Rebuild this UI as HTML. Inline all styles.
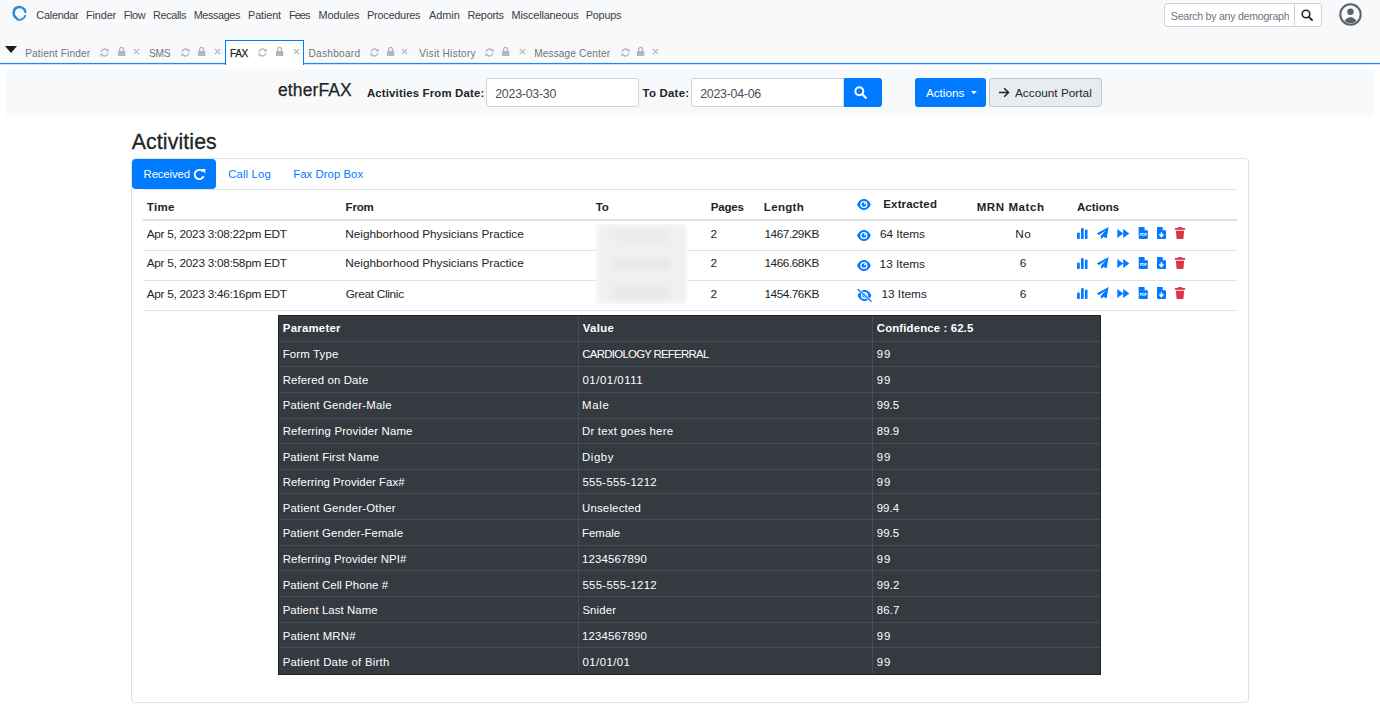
<!DOCTYPE html>
<html><head><meta charset="utf-8"><style>
html,body{margin:0;padding:0;width:1380px;height:708px;overflow:hidden;background:#fff;position:relative;font-family:"Liberation Sans",sans-serif}
.t{position:absolute;line-height:1;white-space:pre;font-family:"Liberation Sans",sans-serif}
svg{display:block}
</style></head><body>
<div style="position:absolute;left:0px;top:0px;width:1380px;height:61px;background:#f8f9fa"></div>
<svg style="position:absolute;left:10px;top:4px;" width="19" height="19" viewBox="0 0 19 19"><g fill="none" stroke="#2a8ad6" stroke-linecap="round"><path d="M3.98 6.15 A6.2 6.2 0 0 1 15.41 7.96" stroke-width="2.3"/><path d="M15.27 11.70 A6.3 6.3 0 0 1 7.40 15.54" stroke-width="1.9"/><path d="M7.15 14.54 A5.9 5.9 0 0 1 4.20 6.66" stroke-width="2.5"/></g></svg>
<div class="t" style="left:36.35px;top:10.17px;font-size:10.9px;font-weight:400;color:#3b4046;letter-spacing:-0.259px;">Calendar</div>
<div class="t" style="left:86.11px;top:10.17px;font-size:10.9px;font-weight:400;color:#3b4046;letter-spacing:-0.164px;">Finder</div>
<div class="t" style="left:123.71px;top:10.17px;font-size:10.9px;font-weight:400;color:#3b4046;letter-spacing:-0.383px;">Flow</div>
<div class="t" style="left:153.11px;top:10.17px;font-size:10.9px;font-weight:400;color:#3b4046;letter-spacing:-0.409px;">Recalls</div>
<div class="t" style="left:193.71px;top:10.17px;font-size:10.9px;font-weight:400;color:#3b4046;letter-spacing:-0.428px;">Messages</div>
<div class="t" style="left:248.11px;top:10.17px;font-size:10.9px;font-weight:400;color:#3b4046;letter-spacing:-0.160px;">Patient</div>
<div class="t" style="left:288.91px;top:10.17px;font-size:10.9px;font-weight:400;color:#3b4046;letter-spacing:-0.915px;">Fees</div>
<div class="t" style="left:318.41px;top:10.17px;font-size:10.9px;font-weight:400;color:#3b4046;letter-spacing:-0.003px;">Modules</div>
<div class="t" style="left:367.11px;top:10.17px;font-size:10.9px;font-weight:400;color:#3b4046;letter-spacing:-0.251px;">Procedures</div>
<div class="t" style="left:428.98px;top:10.17px;font-size:10.9px;font-weight:400;color:#3b4046;letter-spacing:-0.018px;">Admin</div>
<div class="t" style="left:467.51px;top:10.17px;font-size:10.9px;font-weight:400;color:#3b4046;letter-spacing:-0.279px;">Reports</div>
<div class="t" style="left:511.61px;top:10.17px;font-size:10.9px;font-weight:400;color:#3b4046;letter-spacing:-0.165px;">Miscellaneous</div>
<div class="t" style="left:585.71px;top:10.17px;font-size:10.9px;font-weight:400;color:#3b4046;letter-spacing:-0.217px;">Popups</div>
<div style="position:absolute;left:1164px;top:3px;width:131px;height:24px;background:#fff;border:1px solid #ced4da;border-radius:3px 0 0 3px;box-sizing:border-box"></div>
<div class="t" style="left:1170.82px;top:10.93px;font-size:10.6px;font-weight:400;color:#6c757d;letter-spacing:-0.250px;width:118px;overflow:hidden">Search by any demograph</div>
<div style="position:absolute;left:1294px;top:3px;width:28px;height:24px;background:#fff;border:1px solid #ced4da;border-radius:0 3px 3px 0;box-sizing:border-box"></div>
<svg style="position:absolute;left:1301px;top:9px;" width="12" height="12" viewBox="0 0 12 12"><circle cx="5" cy="5" r="3.8" fill="none" stroke="#212529" stroke-width="1.6"/><path d="M7.8 7.8 L11 11" stroke="#212529" stroke-width="1.8" stroke-linecap="round"/></svg>
<svg style="position:absolute;left:1339px;top:3px;" width="23" height="23" viewBox="0 0 23 23"><circle cx="11.5" cy="11.5" r="10.2" fill="none" stroke="#5a6169" stroke-width="2"/><circle cx="11.5" cy="8.8" r="3.2" fill="#5a6169"/><path d="M5.5 17.5 Q11.5 10.5 17.5 17.5 L16 19 Q11.5 21.5 7 19 Z" fill="#5a6169"/></svg>
<svg style="position:absolute;left:5px;top:46px;" width="13" height="8" viewBox="0 0 13 8"><path d="M0 0 L12 0 L6 7 Z" fill="#1a1a1a"/></svg>
<div style="position:absolute;left:0px;top:63px;width:1380px;height:1px;background:#1f87ff"></div>
<div style="position:absolute;left:0px;top:64px;width:1380px;height:1px;background:#c9e2ff"></div>
<div style="position:absolute;left:0px;top:62px;width:1380px;height:1px;background:#e3f0ff"></div>
<div style="position:absolute;left:225px;top:40px;width:79px;height:25px;background:#fff;border:1px solid #007bff;border-bottom:none;box-sizing:border-box"></div>
<div class="t" style="left:25.17px;top:48.75px;font-size:10.1px;font-weight:400;color:#6c757d;letter-spacing:0.162px;">Patient Finder</div>
<svg style="position:absolute;left:100px;top:47.5px;" width="9" height="9" viewBox="0 0 9 9"><path d="M1.2 4 A3.4 3.4 0 0 1 7.2 2.3" fill="none" stroke="#adb5bd" stroke-width="1.3"/><path d="M7.8 5 A3.4 3.4 0 0 1 1.8 6.7" fill="none" stroke="#adb5bd" stroke-width="1.3"/><path d="M8.6 0.6 L8.6 3.6 L5.6 3.6 Z" fill="#adb5bd"/><path d="M0.4 8.4 L0.4 5.4 L3.4 5.4 Z" fill="#adb5bd"/></svg>
<svg style="position:absolute;left:116.5px;top:46px;" width="10" height="11" viewBox="0 0 10 11"><path d="M2.7 5.4 V3.3 A1.9 1.9 0 0 1 6.5 3.3 V5.4" fill="none" stroke="#b0b6bc" stroke-width="1.3"/><rect x="1" y="5" width="7.3" height="5" rx="0.6" fill="#b0b6bc"/></svg>
<svg style="position:absolute;left:133px;top:48px;" width="7" height="7" viewBox="0 0 7 7"><path d="M0.8 0.8 L6.2 6.2 M6.2 0.8 L0.8 6.2" stroke="#adb5bd" stroke-width="1.1"/></svg>
<div class="t" style="left:149.05px;top:48.75px;font-size:10.1px;font-weight:400;color:#6c757d;letter-spacing:-0.239px;">SMS</div>
<svg style="position:absolute;left:180.5px;top:47.5px;" width="9" height="9" viewBox="0 0 9 9"><path d="M1.2 4 A3.4 3.4 0 0 1 7.2 2.3" fill="none" stroke="#adb5bd" stroke-width="1.3"/><path d="M7.8 5 A3.4 3.4 0 0 1 1.8 6.7" fill="none" stroke="#adb5bd" stroke-width="1.3"/><path d="M8.6 0.6 L8.6 3.6 L5.6 3.6 Z" fill="#adb5bd"/><path d="M0.4 8.4 L0.4 5.4 L3.4 5.4 Z" fill="#adb5bd"/></svg>
<svg style="position:absolute;left:196.5px;top:46px;" width="10" height="11" viewBox="0 0 10 11"><path d="M2.7 5.4 V3.3 A1.9 1.9 0 0 1 6.5 3.3 V5.4" fill="none" stroke="#b0b6bc" stroke-width="1.3"/><rect x="1" y="5" width="7.3" height="5" rx="0.6" fill="#b0b6bc"/></svg>
<svg style="position:absolute;left:213.5px;top:48px;" width="7" height="7" viewBox="0 0 7 7"><path d="M0.8 0.8 L6.2 6.2 M6.2 0.8 L0.8 6.2" stroke="#adb5bd" stroke-width="1.1"/></svg>
<div class="t" style="left:230.07px;top:48.75px;font-size:10.1px;font-weight:400;color:#212529;letter-spacing:-0.474px;-webkit-text-stroke:0.25px #212529">FAX</div>
<svg style="position:absolute;left:258px;top:47.5px;" width="9" height="9" viewBox="0 0 9 9"><path d="M1.2 4 A3.4 3.4 0 0 1 7.2 2.3" fill="none" stroke="#adb5bd" stroke-width="1.3"/><path d="M7.8 5 A3.4 3.4 0 0 1 1.8 6.7" fill="none" stroke="#adb5bd" stroke-width="1.3"/><path d="M8.6 0.6 L8.6 3.6 L5.6 3.6 Z" fill="#adb5bd"/><path d="M0.4 8.4 L0.4 5.4 L3.4 5.4 Z" fill="#adb5bd"/></svg>
<svg style="position:absolute;left:275px;top:46px;" width="10" height="11" viewBox="0 0 10 11"><path d="M2.7 5.4 V3.3 A1.9 1.9 0 0 1 6.5 3.3 V5.4" fill="none" stroke="#b0b6bc" stroke-width="1.3"/><rect x="1" y="5" width="7.3" height="5" rx="0.6" fill="#b0b6bc"/></svg>
<svg style="position:absolute;left:293px;top:48px;" width="7" height="7" viewBox="0 0 7 7"><path d="M0.8 0.8 L6.2 6.2 M6.2 0.8 L0.8 6.2" stroke="#adb5bd" stroke-width="1.1"/></svg>
<div class="t" style="left:308.57px;top:48.75px;font-size:10.1px;font-weight:400;color:#6c757d;letter-spacing:0.271px;">Dashboard</div>
<svg style="position:absolute;left:370px;top:47.5px;" width="9" height="9" viewBox="0 0 9 9"><path d="M1.2 4 A3.4 3.4 0 0 1 7.2 2.3" fill="none" stroke="#adb5bd" stroke-width="1.3"/><path d="M7.8 5 A3.4 3.4 0 0 1 1.8 6.7" fill="none" stroke="#adb5bd" stroke-width="1.3"/><path d="M8.6 0.6 L8.6 3.6 L5.6 3.6 Z" fill="#adb5bd"/><path d="M0.4 8.4 L0.4 5.4 L3.4 5.4 Z" fill="#adb5bd"/></svg>
<svg style="position:absolute;left:386px;top:46px;" width="10" height="11" viewBox="0 0 10 11"><path d="M2.7 5.4 V3.3 A1.9 1.9 0 0 1 6.5 3.3 V5.4" fill="none" stroke="#b0b6bc" stroke-width="1.3"/><rect x="1" y="5" width="7.3" height="5" rx="0.6" fill="#b0b6bc"/></svg>
<svg style="position:absolute;left:401px;top:48px;" width="7" height="7" viewBox="0 0 7 7"><path d="M0.8 0.8 L6.2 6.2 M6.2 0.8 L0.8 6.2" stroke="#adb5bd" stroke-width="1.1"/></svg>
<div class="t" style="left:419.26px;top:48.75px;font-size:10.1px;font-weight:400;color:#6c757d;letter-spacing:0.270px;">Visit History</div>
<svg style="position:absolute;left:485px;top:47.5px;" width="9" height="9" viewBox="0 0 9 9"><path d="M1.2 4 A3.4 3.4 0 0 1 7.2 2.3" fill="none" stroke="#adb5bd" stroke-width="1.3"/><path d="M7.8 5 A3.4 3.4 0 0 1 1.8 6.7" fill="none" stroke="#adb5bd" stroke-width="1.3"/><path d="M8.6 0.6 L8.6 3.6 L5.6 3.6 Z" fill="#adb5bd"/><path d="M0.4 8.4 L0.4 5.4 L3.4 5.4 Z" fill="#adb5bd"/></svg>
<svg style="position:absolute;left:501px;top:46px;" width="10" height="11" viewBox="0 0 10 11"><path d="M2.7 5.4 V3.3 A1.9 1.9 0 0 1 6.5 3.3 V5.4" fill="none" stroke="#b0b6bc" stroke-width="1.3"/><rect x="1" y="5" width="7.3" height="5" rx="0.6" fill="#b0b6bc"/></svg>
<svg style="position:absolute;left:519px;top:48px;" width="7" height="7" viewBox="0 0 7 7"><path d="M0.8 0.8 L6.2 6.2 M6.2 0.8 L0.8 6.2" stroke="#adb5bd" stroke-width="1.1"/></svg>
<div class="t" style="left:534.17px;top:48.75px;font-size:10.1px;font-weight:400;color:#6c757d;letter-spacing:0.145px;">Message Center</div>
<svg style="position:absolute;left:621px;top:47.5px;" width="9" height="9" viewBox="0 0 9 9"><path d="M1.2 4 A3.4 3.4 0 0 1 7.2 2.3" fill="none" stroke="#adb5bd" stroke-width="1.3"/><path d="M7.8 5 A3.4 3.4 0 0 1 1.8 6.7" fill="none" stroke="#adb5bd" stroke-width="1.3"/><path d="M8.6 0.6 L8.6 3.6 L5.6 3.6 Z" fill="#adb5bd"/><path d="M0.4 8.4 L0.4 5.4 L3.4 5.4 Z" fill="#adb5bd"/></svg>
<svg style="position:absolute;left:636px;top:46px;" width="10" height="11" viewBox="0 0 10 11"><path d="M2.7 5.4 V3.3 A1.9 1.9 0 0 1 6.5 3.3 V5.4" fill="none" stroke="#b0b6bc" stroke-width="1.3"/><rect x="1" y="5" width="7.3" height="5" rx="0.6" fill="#b0b6bc"/></svg>
<svg style="position:absolute;left:652px;top:48px;" width="7" height="7" viewBox="0 0 7 7"><path d="M0.8 0.8 L6.2 6.2 M6.2 0.8 L0.8 6.2" stroke="#adb5bd" stroke-width="1.1"/></svg>
<div style="position:absolute;left:6px;top:69px;width:1368px;height:47px;background:#f8f9fa"></div>
<div class="t" style="left:278.06px;top:82.19px;font-size:17.5px;font-weight:400;color:#212529;letter-spacing:0.092px;-webkit-text-stroke:0.25px #212529">etherFAX</div>
<div class="t" style="left:366.93px;top:87.95px;font-size:11.4px;font-weight:700;color:#212529;letter-spacing:0.167px;">Activities From Date:</div>
<div style="position:absolute;left:486px;top:78px;width:153px;height:29px;background:#fff;border:1px solid #ced4da;border-radius:3px;box-sizing:border-box"></div>
<div class="t" style="left:495.18px;top:88.00px;font-size:12.4px;font-weight:400;color:#495057;letter-spacing:-0.237px;">2023-03-30</div>
<div class="t" style="left:642.57px;top:87.95px;font-size:11.4px;font-weight:700;color:#212529;letter-spacing:0.252px;">To Date:</div>
<div style="position:absolute;left:691px;top:78px;width:153px;height:29px;background:#fff;border:1px solid #ced4da;border-radius:3px 0 0 3px;box-sizing:border-box"></div>
<div class="t" style="left:700.18px;top:88.00px;font-size:12.4px;font-weight:400;color:#495057;letter-spacing:-0.264px;">2023-04-06</div>
<div style="position:absolute;left:844px;top:78px;width:38px;height:29px;background:#007bff;border-radius:0 3px 3px 0"></div>
<svg style="position:absolute;left:854px;top:86px;" width="13" height="13" viewBox="0 0 13 13"><circle cx="5.3" cy="5.3" r="4" fill="none" stroke="#fff" stroke-width="2"/><path d="M8.3 8.3 L11.8 11.8" stroke="#fff" stroke-width="2.2" stroke-linecap="round"/></svg>
<div style="position:absolute;left:915px;top:78px;width:71px;height:29px;background:#007bff;border-radius:3px"></div>
<div class="t" style="left:925.88px;top:87.81px;font-size:11.8px;font-weight:400;color:#fff;letter-spacing:-0.024px;">Actions</div>
<svg style="position:absolute;left:970.5px;top:91px;" width="6" height="4" viewBox="0 0 6 4"><path d="M0 0 L5.8 0 L2.9 3.3 Z" fill="#fff"/></svg>
<div style="position:absolute;left:989px;top:78px;width:113px;height:29px;background:#e9ecef;border:1px solid #c4c8cc;border-radius:3px;box-sizing:border-box"></div>
<svg style="position:absolute;left:998px;top:87px;" width="12" height="11" viewBox="0 0 12 11"><path d="M1 5.5 H10.5 M6.2 1.2 L10.5 5.5 L6.2 9.8" fill="none" stroke="#212529" stroke-width="1.5"/></svg>
<div class="t" style="left:1014.98px;top:87.81px;font-size:11.8px;font-weight:400;color:#212529;letter-spacing:0.005px;">Account Portal</div>
<div class="t" style="left:131.66px;top:131.67px;font-size:21.3px;font-weight:400;color:#212529;letter-spacing:0.120px;-webkit-text-stroke:0.3px #212529">Activities</div>
<div style="position:absolute;left:131px;top:158px;width:1118px;height:545px;border:1px solid #dee2e6;border-radius:4px;box-sizing:border-box;background:#fff"></div>
<div style="position:absolute;left:132px;top:159px;width:84px;height:30px;background:#007bff;border-radius:4px"></div>
<div class="t" style="left:143.57px;top:169.13px;font-size:11.3px;font-weight:400;color:#fff;letter-spacing:-0.094px;">Received</div>
<svg style="position:absolute;left:193px;top:168px;" width="13" height="12" viewBox="0 0 13 12"><path d="M9.9 3.6 A4.6 4.6 0 1 0 10.6 8.2" fill="none" stroke="#fff" stroke-width="1.9"/><path d="M8 1 L12.3 1 L12.3 5.4 Z" fill="#fff"/></svg>
<div class="t" style="left:228.13px;top:169.13px;font-size:11.3px;font-weight:400;color:#007bff;letter-spacing:0.161px;">Call Log</div>
<div class="t" style="left:293.27px;top:169.13px;font-size:11.3px;font-weight:400;color:#007bff;letter-spacing:0.069px;">Fax Drop Box</div>
<div style="position:absolute;left:143px;top:189px;width:1094px;height:1px;background:#dee2e6"></div>
<div style="position:absolute;left:143px;top:219px;width:1094px;height:2px;background:#dee2e6"></div>
<div style="position:absolute;left:143px;top:250px;width:1094px;height:1px;background:#dee2e6"></div>
<div style="position:absolute;left:143px;top:280px;width:1094px;height:1px;background:#dee2e6"></div>
<div style="position:absolute;left:143px;top:310px;width:1094px;height:1px;background:#dee2e6"></div>
<div class="t" style="left:146.87px;top:202.07px;font-size:11.5px;font-weight:700;color:#212529;letter-spacing:0.295px;">Time</div>
<div class="t" style="left:345.54px;top:202.07px;font-size:11.5px;font-weight:700;color:#212529;letter-spacing:-0.150px;">From</div>
<div class="t" style="left:595.67px;top:202.07px;font-size:11.5px;font-weight:700;color:#212529;letter-spacing:-0.027px;">To</div>
<div class="t" style="left:710.64px;top:202.07px;font-size:11.5px;font-weight:700;color:#212529;letter-spacing:-0.140px;">Pages</div>
<div class="t" style="left:763.84px;top:202.07px;font-size:11.5px;font-weight:700;color:#212529;letter-spacing:0.328px;">Length</div>
<div class="t" style="left:883.24px;top:198.57px;font-size:11.5px;font-weight:700;color:#212529;letter-spacing:0.163px;">Extracted</div>
<div class="t" style="left:976.64px;top:202.07px;font-size:11.5px;font-weight:700;color:#212529;letter-spacing:0.594px;">MRN Match</div>
<div class="t" style="left:1076.92px;top:202.07px;font-size:11.5px;font-weight:700;color:#212529;letter-spacing:0.028px;">Actions</div>
<svg style="position:absolute;left:857.3px;top:198.8px;" width="14" height="11" viewBox="0 0 14 11"><path d="M0 5.5 C2 1.2 5 0 6.9 0 C8.8 0 11.8 1.2 13.8 5.5 C11.8 9.8 8.8 11 6.9 11 C5 11 2 9.8 0 5.5 Z" fill="#007bff"/><circle cx="6.9" cy="5.5" r="3.6" fill="#fff"/><circle cx="6.9" cy="5.5" r="2.3" fill="#007bff"/><circle cx="7.9" cy="4.4" r="0.9" fill="#fff"/></svg>
<div class="t" style="left:146.68px;top:228.61px;font-size:11.8px;font-weight:400;color:#212529;letter-spacing:-0.272px;">Apr 5, 2023 3:08:22pm EDT</div>
<div class="t" style="left:345.33px;top:228.61px;font-size:11.8px;font-weight:400;color:#212529;letter-spacing:-0.040px;">Neighborhood Physicians Practice</div>
<div class="t" style="left:710.41px;top:228.61px;font-size:11.8px;font-weight:400;color:#212529;letter-spacing:0.000px;">2</div>
<div class="t" style="left:764.40px;top:228.61px;font-size:11.8px;font-weight:400;color:#212529;letter-spacing:-0.436px;">1467.29KB</div>
<svg style="position:absolute;left:857.3px;top:229.9px;" width="14" height="11" viewBox="0 0 14 11"><path d="M0 5.5 C2 1.2 5 0 6.9 0 C8.8 0 11.8 1.2 13.8 5.5 C11.8 9.8 8.8 11 6.9 11 C5 11 2 9.8 0 5.5 Z" fill="#007bff"/><circle cx="6.9" cy="5.5" r="3.6" fill="#fff"/><circle cx="6.9" cy="5.5" r="2.3" fill="#007bff"/><circle cx="7.9" cy="4.4" r="0.9" fill="#fff"/></svg>
<div class="t" style="left:879.91px;top:229.11px;font-size:11.8px;font-weight:400;color:#212529;letter-spacing:-0.020px;">64 Items</div>
<div class="t" style="left:1015.33px;top:228.61px;font-size:11.8px;font-weight:400;color:#212529;letter-spacing:0.400px;">No</div>
<svg style="position:absolute;left:1076px;top:226px;" width="13" height="14" viewBox="0 0 13 14"><g fill="#007bff"><rect x="1" y="6.5" width="2.8" height="6.6" rx="1.2"/><rect x="5" y="1.9" width="2.7" height="11.2" rx="1.2"/><rect x="8.9" y="3.4" width="2.6" height="9.7" rx="1.2"/></g></svg>
<svg style="position:absolute;left:1096px;top:226px;" width="13" height="14" viewBox="0 0 13 14"><g fill="#007bff"><path d="M12.6 1.1 L0.8 7.6 L3.0 9.0 L10.4 3.9 Z"/><path d="M12.6 1.1 L4.7 10.1 L5.2 13.0 L7.4 10.7 L10.6 12.5 Z"/></g></svg>
<svg style="position:absolute;left:1116px;top:226px;" width="14" height="14" viewBox="0 0 14 14"><g fill="#007bff"><path d="M1.3 3 L7.3 7.5 L1.3 12 Z"/><path d="M7.2 3 L13.4 7.5 L7.2 12 Z"/></g></svg>
<svg style="position:absolute;left:1137px;top:226px;" width="12" height="14" viewBox="0 0 12 14"><path d="M1.7 1 H7 L10.8 4.8 V12 A0.9 0.9 0 0 1 9.9 12.9 H2.6 A0.9 0.9 0 0 1 1.7 12 Z" fill="#007bff"/><path d="M7.3 1 V4.5 H10.8 Z" fill="#fff"/><path d="M7.3 1.4 V4.5 H10.4" fill="none" stroke="#007bff" stroke-width="0.6"/><text x="6.25" y="9.9" font-size="3.8" font-family="Liberation Sans" font-weight="700" fill="#fff" text-anchor="middle" letter-spacing="-0.2">PDF</text></svg>
<svg style="position:absolute;left:1156px;top:226px;" width="12" height="14" viewBox="0 0 12 14"><path d="M1 1 H6.3 L10 4.8 V12 A0.9 0.9 0 0 1 9.1 12.9 H1.9 A0.9 0.9 0 0 1 1 12 Z" fill="#007bff"/><path d="M6.5 1 V4.5 H10 Z" fill="#fff"/><path d="M6.5 1.4 V4.5 H9.6" fill="none" stroke="#007bff" stroke-width="0.6"/><path d="M5.4 6.2 V10 M3.4 8.2 L5.4 10.6 L7.4 8.2" fill="none" stroke="#fff" stroke-width="1.4"/></svg>
<svg style="position:absolute;left:1174px;top:226px;" width="12" height="14" viewBox="0 0 12 14"><g fill="#dc3545"><rect x="0.9" y="1.9" width="10.2" height="1.9"/><rect x="4.2" y="1" width="3.6" height="1.4"/><path d="M1.9 4.8 H10.1 L9.5 12.2 A0.8 0.8 0 0 1 8.7 12.9 H3.3 A0.8 0.8 0 0 1 2.5 12.2 Z"/></g></svg>
<div class="t" style="left:146.68px;top:258.11px;font-size:11.8px;font-weight:400;color:#212529;letter-spacing:-0.272px;">Apr 5, 2023 3:08:58pm EDT</div>
<div class="t" style="left:345.33px;top:258.11px;font-size:11.8px;font-weight:400;color:#212529;letter-spacing:-0.040px;">Neighborhood Physicians Practice</div>
<div class="t" style="left:710.41px;top:258.11px;font-size:11.8px;font-weight:400;color:#212529;letter-spacing:0.000px;">2</div>
<div class="t" style="left:764.40px;top:258.11px;font-size:11.8px;font-weight:400;color:#212529;letter-spacing:-0.436px;">1466.68KB</div>
<svg style="position:absolute;left:857.3px;top:259.8px;" width="14" height="11" viewBox="0 0 14 11"><path d="M0 5.5 C2 1.2 5 0 6.9 0 C8.8 0 11.8 1.2 13.8 5.5 C11.8 9.8 8.8 11 6.9 11 C5 11 2 9.8 0 5.5 Z" fill="#007bff"/><circle cx="6.9" cy="5.5" r="3.6" fill="#fff"/><circle cx="6.9" cy="5.5" r="2.3" fill="#007bff"/><circle cx="7.9" cy="4.4" r="0.9" fill="#fff"/></svg>
<div class="t" style="left:879.60px;top:258.61px;font-size:11.8px;font-weight:400;color:#212529;letter-spacing:0.024px;">13 Items</div>
<div class="t" style="left:1019.81px;top:258.11px;font-size:11.8px;font-weight:400;color:#212529;letter-spacing:0.000px;">6</div>
<svg style="position:absolute;left:1076px;top:256px;" width="13" height="14" viewBox="0 0 13 14"><g fill="#007bff"><rect x="1" y="6.5" width="2.8" height="6.6" rx="1.2"/><rect x="5" y="1.9" width="2.7" height="11.2" rx="1.2"/><rect x="8.9" y="3.4" width="2.6" height="9.7" rx="1.2"/></g></svg>
<svg style="position:absolute;left:1096px;top:256px;" width="13" height="14" viewBox="0 0 13 14"><g fill="#007bff"><path d="M12.6 1.1 L0.8 7.6 L3.0 9.0 L10.4 3.9 Z"/><path d="M12.6 1.1 L4.7 10.1 L5.2 13.0 L7.4 10.7 L10.6 12.5 Z"/></g></svg>
<svg style="position:absolute;left:1116px;top:256px;" width="14" height="14" viewBox="0 0 14 14"><g fill="#007bff"><path d="M1.3 3 L7.3 7.5 L1.3 12 Z"/><path d="M7.2 3 L13.4 7.5 L7.2 12 Z"/></g></svg>
<svg style="position:absolute;left:1137px;top:256px;" width="12" height="14" viewBox="0 0 12 14"><path d="M1.7 1 H7 L10.8 4.8 V12 A0.9 0.9 0 0 1 9.9 12.9 H2.6 A0.9 0.9 0 0 1 1.7 12 Z" fill="#007bff"/><path d="M7.3 1 V4.5 H10.8 Z" fill="#fff"/><path d="M7.3 1.4 V4.5 H10.4" fill="none" stroke="#007bff" stroke-width="0.6"/><text x="6.25" y="9.9" font-size="3.8" font-family="Liberation Sans" font-weight="700" fill="#fff" text-anchor="middle" letter-spacing="-0.2">PDF</text></svg>
<svg style="position:absolute;left:1156px;top:256px;" width="12" height="14" viewBox="0 0 12 14"><path d="M1 1 H6.3 L10 4.8 V12 A0.9 0.9 0 0 1 9.1 12.9 H1.9 A0.9 0.9 0 0 1 1 12 Z" fill="#007bff"/><path d="M6.5 1 V4.5 H10 Z" fill="#fff"/><path d="M6.5 1.4 V4.5 H9.6" fill="none" stroke="#007bff" stroke-width="0.6"/><path d="M5.4 6.2 V10 M3.4 8.2 L5.4 10.6 L7.4 8.2" fill="none" stroke="#fff" stroke-width="1.4"/></svg>
<svg style="position:absolute;left:1174px;top:256px;" width="12" height="14" viewBox="0 0 12 14"><g fill="#dc3545"><rect x="0.9" y="1.9" width="10.2" height="1.9"/><rect x="4.2" y="1" width="3.6" height="1.4"/><path d="M1.9 4.8 H10.1 L9.5 12.2 A0.8 0.8 0 0 1 8.7 12.9 H3.3 A0.8 0.8 0 0 1 2.5 12.2 Z"/></g></svg>
<div class="t" style="left:146.68px;top:288.51px;font-size:11.8px;font-weight:400;color:#212529;letter-spacing:-0.272px;">Apr 5, 2023 3:46:16pm EDT</div>
<div class="t" style="left:345.71px;top:288.51px;font-size:11.8px;font-weight:400;color:#212529;letter-spacing:-0.300px;">Great Clinic</div>
<div class="t" style="left:710.41px;top:288.51px;font-size:11.8px;font-weight:400;color:#212529;letter-spacing:0.000px;">2</div>
<div class="t" style="left:764.40px;top:288.51px;font-size:11.8px;font-weight:400;color:#212529;letter-spacing:-0.436px;">1454.76KB</div>
<svg style="position:absolute;left:857.3px;top:289px;" width="15" height="13" viewBox="0 0 15 13"><g transform="translate(0.6,1)"><path d="M0 5.5 C2 1.2 5 0 6.9 0 C8.8 0 11.8 1.2 13.8 5.5 C11.8 9.8 8.8 11 6.9 11 C5 11 2 9.8 0 5.5 Z" fill="#007bff"/><circle cx="6.9" cy="5.5" r="3.6" fill="#fff"/><circle cx="6.9" cy="5.5" r="2.3" fill="#007bff"/><circle cx="7.9" cy="4.4" r="0.9" fill="#fff"/></g><path d="M0.8 0.2 L14.5 12.6" stroke="#fff" stroke-width="2.6"/><path d="M0.8 0.2 L14.5 12.6" stroke="#007bff" stroke-width="1.3"/></svg>
<div class="t" style="left:881.40px;top:289.01px;font-size:11.8px;font-weight:400;color:#212529;letter-spacing:0.024px;">13 Items</div>
<div class="t" style="left:1019.81px;top:288.51px;font-size:11.8px;font-weight:400;color:#212529;letter-spacing:0.000px;">6</div>
<svg style="position:absolute;left:1076px;top:286px;" width="13" height="14" viewBox="0 0 13 14"><g fill="#007bff"><rect x="1" y="6.5" width="2.8" height="6.6" rx="1.2"/><rect x="5" y="1.9" width="2.7" height="11.2" rx="1.2"/><rect x="8.9" y="3.4" width="2.6" height="9.7" rx="1.2"/></g></svg>
<svg style="position:absolute;left:1096px;top:286px;" width="13" height="14" viewBox="0 0 13 14"><g fill="#007bff"><path d="M12.6 1.1 L0.8 7.6 L3.0 9.0 L10.4 3.9 Z"/><path d="M12.6 1.1 L4.7 10.1 L5.2 13.0 L7.4 10.7 L10.6 12.5 Z"/></g></svg>
<svg style="position:absolute;left:1116px;top:286px;" width="14" height="14" viewBox="0 0 14 14"><g fill="#007bff"><path d="M1.3 3 L7.3 7.5 L1.3 12 Z"/><path d="M7.2 3 L13.4 7.5 L7.2 12 Z"/></g></svg>
<svg style="position:absolute;left:1137px;top:286px;" width="12" height="14" viewBox="0 0 12 14"><path d="M1.7 1 H7 L10.8 4.8 V12 A0.9 0.9 0 0 1 9.9 12.9 H2.6 A0.9 0.9 0 0 1 1.7 12 Z" fill="#007bff"/><path d="M7.3 1 V4.5 H10.8 Z" fill="#fff"/><path d="M7.3 1.4 V4.5 H10.4" fill="none" stroke="#007bff" stroke-width="0.6"/><text x="6.25" y="9.9" font-size="3.8" font-family="Liberation Sans" font-weight="700" fill="#fff" text-anchor="middle" letter-spacing="-0.2">PDF</text></svg>
<svg style="position:absolute;left:1156px;top:286px;" width="12" height="14" viewBox="0 0 12 14"><path d="M1 1 H6.3 L10 4.8 V12 A0.9 0.9 0 0 1 9.1 12.9 H1.9 A0.9 0.9 0 0 1 1 12 Z" fill="#007bff"/><path d="M6.5 1 V4.5 H10 Z" fill="#fff"/><path d="M6.5 1.4 V4.5 H9.6" fill="none" stroke="#007bff" stroke-width="0.6"/><path d="M5.4 6.2 V10 M3.4 8.2 L5.4 10.6 L7.4 8.2" fill="none" stroke="#fff" stroke-width="1.4"/></svg>
<svg style="position:absolute;left:1174px;top:286px;" width="12" height="14" viewBox="0 0 12 14"><g fill="#dc3545"><rect x="0.9" y="1.9" width="10.2" height="1.9"/><rect x="4.2" y="1" width="3.6" height="1.4"/><path d="M1.9 4.8 H10.1 L9.5 12.2 A0.8 0.8 0 0 1 8.7 12.9 H3.3 A0.8 0.8 0 0 1 2.5 12.2 Z"/></g></svg>
<div style="position:absolute;left:596px;top:224px;width:91px;height:80px;background:#fff;overflow:hidden"><div style="position:absolute;left:0;top:0;width:91px;height:80px;background:#f0f0f0;filter:blur(3px)"></div><div style="position:absolute;left:20px;top:7px;width:50px;height:8px;background:#e6e6e6;filter:blur(4px)"></div><div style="position:absolute;left:18px;top:36px;width:55px;height:8px;background:#e4e4e4;filter:blur(4px)"></div><div style="position:absolute;left:18px;top:65px;width:55px;height:8px;background:#e4e4e4;filter:blur(4px)"></div></div>
<div style="position:absolute;left:278px;top:315px;width:823px;height:360px;background:#343a40;border:1px solid #212529;box-sizing:border-box"></div>
<div class="t" style="left:282.85px;top:323.35px;font-size:11.4px;font-weight:700;color:#fff;letter-spacing:0.230px;">Parameter</div>
<div class="t" style="left:582.83px;top:323.35px;font-size:11.4px;font-weight:700;color:#fff;letter-spacing:0.292px;">Value</div>
<div class="t" style="left:876.83px;top:323.35px;font-size:11.4px;font-weight:700;color:#fff;letter-spacing:0.130px;">Confidence : 62.5</div>
<div style="position:absolute;left:279px;top:341px;width:821px;height:1px;background:#454d55"></div>
<div class="t" style="left:282.67px;top:348.99px;font-size:11.4px;font-weight:400;color:#fff;letter-spacing:0.170px;">Form Type</div>
<div class="t" style="left:582.33px;top:348.99px;font-size:11.4px;font-weight:400;color:#fff;letter-spacing:-0.708px;">CARDIOLOGY REFERRAL</div>
<div class="t" style="left:876.78px;top:348.99px;font-size:11.4px;font-weight:400;color:#fff;letter-spacing:0.883px;">99</div>
<div style="position:absolute;left:279px;top:366px;width:821px;height:1px;background:#454d55"></div>
<div class="t" style="left:282.67px;top:374.63px;font-size:11.4px;font-weight:400;color:#fff;letter-spacing:0.142px;">Refered on Date</div>
<div class="t" style="left:582.46px;top:374.63px;font-size:11.4px;font-weight:400;color:#fff;letter-spacing:0.537px;">01/01/0111</div>
<div class="t" style="left:876.78px;top:374.63px;font-size:11.4px;font-weight:400;color:#fff;letter-spacing:0.883px;">99</div>
<div style="position:absolute;left:279px;top:392px;width:821px;height:1px;background:#454d55"></div>
<div class="t" style="left:282.67px;top:400.27px;font-size:11.4px;font-weight:400;color:#fff;letter-spacing:0.208px;">Patient Gender-Male</div>
<div class="t" style="left:581.97px;top:400.27px;font-size:11.4px;font-weight:400;color:#fff;letter-spacing:0.711px;">Male</div>
<div class="t" style="left:876.78px;top:400.27px;font-size:11.4px;font-weight:400;color:#fff;letter-spacing:0.069px;">99.5</div>
<div style="position:absolute;left:279px;top:418px;width:821px;height:1px;background:#454d55"></div>
<div class="t" style="left:282.67px;top:425.91px;font-size:11.4px;font-weight:400;color:#fff;letter-spacing:0.171px;">Referring Provider Name</div>
<div class="t" style="left:581.97px;top:425.91px;font-size:11.4px;font-weight:400;color:#fff;letter-spacing:0.231px;">Dr text goes here</div>
<div class="t" style="left:876.81px;top:425.91px;font-size:11.4px;font-weight:400;color:#fff;letter-spacing:0.081px;">89.9</div>
<div style="position:absolute;left:279px;top:443px;width:821px;height:1px;background:#454d55"></div>
<div class="t" style="left:282.67px;top:451.55px;font-size:11.4px;font-weight:400;color:#fff;letter-spacing:0.108px;">Patient First Name</div>
<div class="t" style="left:581.97px;top:451.55px;font-size:11.4px;font-weight:400;color:#fff;letter-spacing:0.577px;">Digby</div>
<div class="t" style="left:876.78px;top:451.55px;font-size:11.4px;font-weight:400;color:#fff;letter-spacing:0.883px;">99</div>
<div style="position:absolute;left:279px;top:469px;width:821px;height:1px;background:#454d55"></div>
<div class="t" style="left:282.67px;top:477.19px;font-size:11.4px;font-weight:400;color:#fff;letter-spacing:0.044px;">Referring Provider Fax#</div>
<div class="t" style="left:582.44px;top:477.19px;font-size:11.4px;font-weight:400;color:#fff;letter-spacing:0.294px;">555-555-1212</div>
<div class="t" style="left:876.78px;top:477.19px;font-size:11.4px;font-weight:400;color:#fff;letter-spacing:0.883px;">99</div>
<div style="position:absolute;left:279px;top:493px;width:821px;height:1px;background:#454d55"></div>
<div class="t" style="left:282.67px;top:502.83px;font-size:11.4px;font-weight:400;color:#fff;letter-spacing:0.212px;">Patient Gender-Other</div>
<div class="t" style="left:582.02px;top:502.83px;font-size:11.4px;font-weight:400;color:#fff;letter-spacing:0.197px;">Unselected</div>
<div class="t" style="left:876.78px;top:502.83px;font-size:11.4px;font-weight:400;color:#fff;letter-spacing:0.024px;">99.4</div>
<div style="position:absolute;left:279px;top:519px;width:821px;height:1px;background:#454d55"></div>
<div class="t" style="left:282.67px;top:528.47px;font-size:11.4px;font-weight:400;color:#fff;letter-spacing:0.097px;">Patient Gender-Female</div>
<div class="t" style="left:581.97px;top:528.47px;font-size:11.4px;font-weight:400;color:#fff;letter-spacing:0.046px;">Female</div>
<div class="t" style="left:876.78px;top:528.47px;font-size:11.4px;font-weight:400;color:#fff;letter-spacing:0.069px;">99.5</div>
<div style="position:absolute;left:279px;top:545px;width:821px;height:1px;background:#454d55"></div>
<div class="t" style="left:282.67px;top:554.11px;font-size:11.4px;font-weight:400;color:#fff;letter-spacing:0.126px;">Referring Provider NPI#</div>
<div class="t" style="left:582.03px;top:554.11px;font-size:11.4px;font-weight:400;color:#fff;letter-spacing:0.156px;">1234567890</div>
<div class="t" style="left:876.78px;top:554.11px;font-size:11.4px;font-weight:400;color:#fff;letter-spacing:0.883px;">99</div>
<div style="position:absolute;left:279px;top:570px;width:821px;height:1px;background:#454d55"></div>
<div class="t" style="left:282.67px;top:579.75px;font-size:11.4px;font-weight:400;color:#fff;letter-spacing:0.081px;">Patient Cell Phone #</div>
<div class="t" style="left:582.44px;top:579.75px;font-size:11.4px;font-weight:400;color:#fff;letter-spacing:0.294px;">555-555-1212</div>
<div class="t" style="left:876.78px;top:579.75px;font-size:11.4px;font-weight:400;color:#fff;letter-spacing:0.103px;">99.2</div>
<div style="position:absolute;left:279px;top:596px;width:821px;height:1px;background:#454d55"></div>
<div class="t" style="left:282.67px;top:605.39px;font-size:11.4px;font-weight:400;color:#fff;letter-spacing:0.079px;">Patient Last Name</div>
<div class="t" style="left:582.39px;top:605.39px;font-size:11.4px;font-weight:400;color:#fff;letter-spacing:0.148px;">Snider</div>
<div class="t" style="left:876.81px;top:605.39px;font-size:11.4px;font-weight:400;color:#fff;letter-spacing:0.092px;">86.7</div>
<div style="position:absolute;left:279px;top:622px;width:821px;height:1px;background:#454d55"></div>
<div class="t" style="left:282.67px;top:631.03px;font-size:11.4px;font-weight:400;color:#fff;letter-spacing:0.175px;">Patient MRN#</div>
<div class="t" style="left:582.03px;top:631.03px;font-size:11.4px;font-weight:400;color:#fff;letter-spacing:0.156px;">1234567890</div>
<div class="t" style="left:876.78px;top:631.03px;font-size:11.4px;font-weight:400;color:#fff;letter-spacing:0.883px;">99</div>
<div style="position:absolute;left:279px;top:647px;width:821px;height:1px;background:#454d55"></div>
<div class="t" style="left:282.67px;top:656.67px;font-size:11.4px;font-weight:400;color:#fff;letter-spacing:0.232px;">Patient Date of Birth</div>
<div class="t" style="left:582.46px;top:656.67px;font-size:11.4px;font-weight:400;color:#fff;letter-spacing:0.446px;">01/01/01</div>
<div class="t" style="left:876.78px;top:656.67px;font-size:11.4px;font-weight:400;color:#fff;letter-spacing:0.883px;">99</div>
<div style="position:absolute;left:578px;top:316px;width:1px;height:358px;background:#454d55"></div>
<div style="position:absolute;left:872px;top:316px;width:1px;height:358px;background:#454d55"></div>
</body></html>
